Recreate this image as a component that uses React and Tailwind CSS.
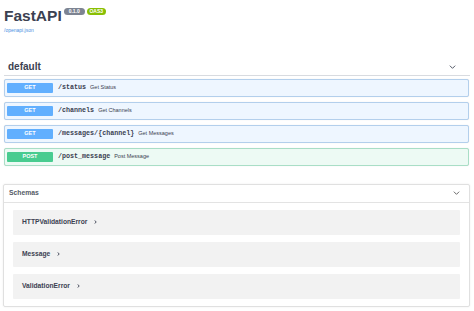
import React from "react";

const ops = [
  { method: "GET", path: "/status", summary: "Get Status" },
  { method: "GET", path: "/channels", summary: "Get Channels" },
  { method: "GET", path: "/messages/{channel}", summary: "Get Messages" },
  { method: "POST", path: "/post_message", summary: "Post Message" },
];

const schemas = ["HTTPValidationError", "Message", "ValidationError"];

const Chevron = ({ className }) => (
  <svg viewBox="0 0 10 6" className={className} fill="none" stroke="currentColor" strokeWidth="1.3">
    <path d="M1 1l4 4 4-4" />
  </svg>
);

const ChevronRight = () => (
  <svg viewBox="0 0 4 6" className="ml-[7px] w-[3px] h-[4px] text-[#3b4151]" fill="none" stroke="currentColor" strokeWidth="1.4">
    <path d="M1 0.7l2 2.3-2 2.3" />
  </svg>
);

const OpRow = ({ method, path, summary }) => {
  const isPost = method === "POST";
  return (
    <div
      className={
        isPost
          ? "h-[18px] flex items-center pl-[2px] border border-[#a9dec6] bg-[#edfaf4] rounded-[2px] shadow-[0_0_1px_rgba(0,0,0,0.15)]"
          : "h-[18px] flex items-center pl-[2px] border border-[#b3cfec] bg-[#eef6ff] rounded-[2px] shadow-[0_0_1px_rgba(0,0,0,0.15)]"
      }
    >
      <div
        className={
          isPost
            ? "w-[46px] h-[10px] flex items-center justify-center bg-[#49cc90] rounded-[1px] text-white text-[5.5px] font-bold"
            : "w-[46px] h-[10px] flex items-center justify-center bg-[#61affe] rounded-[1px] text-white text-[5.5px] font-bold"
        }
      >
        {method}
      </div>
      <span className="ml-[5px] font-['Liberation_Mono',monospace] font-bold text-[6.7px] text-[#3b4151]">
        {path}
      </span>
      <span className="ml-[4px] text-[5.5px] text-[#3b4151]">{summary}</span>
    </div>
  );
};

export default function App() {
  return (
    <div className="w-[474px] h-[311px] bg-white overflow-hidden font-['Liberation_Sans',Arial,sans-serif] text-[#3b4151]">
      {/* info */}
      <div className="pl-[4px] pt-[8px]">
        <div className="flex items-start">
          <h2 className="text-[15.5px] leading-none font-bold text-[#3b4151]">FastAPI</h2>
          <span className="ml-[2px] h-[7px] w-[21px] flex items-center justify-center rounded-full bg-[#7d8492] text-white text-[5px] font-bold">
            0.1.0
          </span>
          <span className="ml-[2px] h-[7px] w-[19px] flex items-center justify-center rounded-full bg-[#89bf04] text-white text-[5px] font-bold">
            OAS3
          </span>
        </div>
        <div className="mt-[4px] text-[5px] leading-none text-[#4990e2]">/openapi.json</div>
      </div>

      {/* default tag */}
      <div className="mx-[4px] mt-[26px]">
        <div className="flex items-center justify-between h-[17px] border-b border-[#d8dbe0] pl-[4px] pr-[14px]">
          <h3 className="text-[10px] leading-none font-bold text-[#3b4151]">default</h3>
          <Chevron className="w-[7px] h-[4px] text-[#3b4151]" />
        </div>
        <div className="mt-[3px] mr-[1px] flex flex-col gap-[5px]">
          {ops.map((op) => (
            <OpRow key={op.path} {...op} />
          ))}
        </div>
      </div>

      {/* schemas */}
      <div className="mx-[3px] mt-[18px] mr-[4px] h-[123px] border border-[#e0e0e0] rounded-[2px] shadow-[0_0_2px_rgba(0,0,0,0.08)]">
        <div className="h-[18px] flex items-center justify-between pl-[5px] pr-[9px] border-b border-[#e3e3e3]">
          <span className="text-[6.8px] font-bold text-[#555b66]">Schemas</span>
          <Chevron className="w-[7px] h-[4px] text-[#555]" />
        </div>
        <div className="pt-[7px] px-[9px] flex flex-col gap-[7px]">
          {schemas.map((s) => (
            <div key={s} className="h-[25px] flex items-center pl-[9px] bg-[#f2f2f2] rounded-[1px]">
              <span className="text-[6.7px] font-bold text-[#3b4151]">{s}</span>
              <ChevronRight />
            </div>
          ))}
        </div>
      </div>
    </div>
  );
}
